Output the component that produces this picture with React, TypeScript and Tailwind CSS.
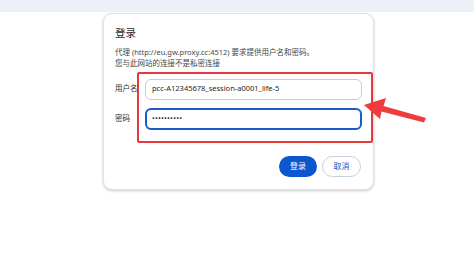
export default function App() {
  return (
    <div
      className="relative w-[474px] h-[254px] overflow-hidden bg-white"
      style={{ fontFamily: '"Noto Sans", "Noto Sans CJK SC", sans-serif' }}
    >
      <div className="h-[12px] bg-[#eef0f8]" />

      <div className="ml-[103px] mt-[1px] w-[271px] h-[177px] rounded-[9px] border border-[#e2e2e2] bg-white pl-[11px] pr-[11px] pt-[12px] shadow-[0_1px_3px_rgba(0,0,0,0.22)]">
        <div className="text-[10.5px] leading-[14px] text-[#1f1f1f]">登录</div>
        <div className="mt-[6.5px] text-[7.5px] leading-[11px] text-[#444746]">
          <div>代理 (http://eu.gw.proxy.cc:4512) 要求提供用户名和密码。</div>
          <div>您与此网站的连接不是私密连接</div>
        </div>

        <div className="mt-[10px] flex flex-col gap-[8px]">
          <Row label="用户名">
            <div className="flex h-[21px] w-[217px] items-center rounded-[6px] border border-[#c9cccf] bg-white px-[6px] text-[7.5px] text-[#1f1f1f]">
              pcc-A12345678_session-a0001_life-5
            </div>
          </Row>
          <Row label="密码">
            <div className="flex h-[22px] w-[217px] items-center rounded-[6px] border-2 border-[#1a5dc8] bg-white px-[5px] text-[7.5px] tracking-[0.2px] text-[#1f1f1f]">
              ••••••••••
            </div>
          </Row>
        </div>

        <div className="mt-[26px] flex justify-end gap-[5px] pr-[1px]">
          <button className="h-[21px] w-[38px] rounded-full bg-[#0b57d0] text-[8px] text-white">登录</button>
          <button className="h-[21px] w-[39px] rounded-full border border-[#c7d0dd] bg-white text-[8px] text-[#0b57d0]">
            取消
          </button>
        </div>
      </div>

      {/* annotation overlay */}
      <div className="absolute left-[137px] top-[72px] h-[71px] w-[236px] rounded-[2px] border-2 border-[#e8383d]" />
      <svg className="absolute left-0 top-0" width="474" height="254" viewBox="0 0 474 254">
        <polygon
          points="364,105 386,98 383.5,106 426,118 424,122.5 381.5,111.5 380,119"
          fill="#ef3b3b"
        />
      </svg>
    </div>
  );
}

function Row({ label, children }: { label: string; children: React.ReactNode }) {
  return (
    <div className="flex items-center">
      <span className="w-[30px] text-[7.5px] text-[#1f1f1f]">{label}</span>
      {children}
    </div>
  );
}
